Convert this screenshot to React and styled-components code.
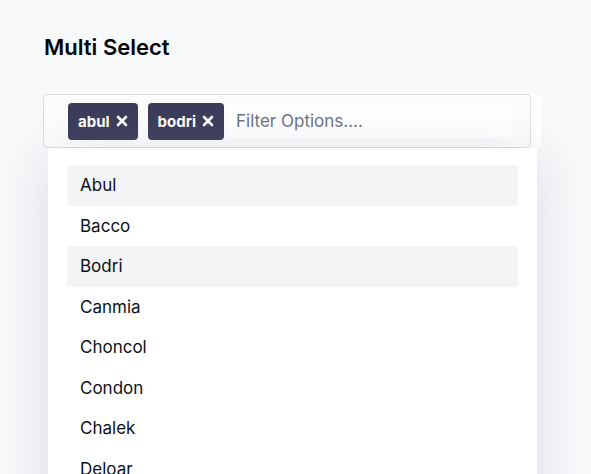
import React, { useState } from "react";
import styled, { createGlobalStyle } from "styled-components";

const GlobalStyle = createGlobalStyle`
  * { box-sizing: border-box; }
  html, body {
    margin: 0;
    height: 100%;
    background: #f8f9fa;
    font-family: Inter, "Noto Sans", sans-serif;
    color: #111827;
    overflow: hidden;
  }
`;

const Page = styled.div`
  padding: 34px 0 0 43px;
`;

const Title = styled.h2`
  margin: 0 0 34px 1px;
  font-size: 22px;
  line-height: 26px;
  font-weight: 600;
  color: #050509;
`;

const Select = styled.div`
  position: relative;
  width: 488px;
`;

const Control = styled.div`
  display: flex;
  align-items: center;
  gap: 10px;
  height: 54px;
  padding: 0 19px 0 24px;
  border: 1px solid #dcdde1;
  border-radius: 4px;
  background: #fcfcfd;
  box-shadow: 10px 0 0 #ffffff;
`;

const Tag = styled.span`
  display: inline-flex;
  align-items: center;
  gap: 6px;
  height: 37px;
  padding: 0 10px;
  border-radius: 4px;
  background: #3b3c59;
  color: #ffffff;
  font-size: 15px;
  font-weight: 700;
`;

const Remove = styled.button`
  display: flex;
  padding: 0;
  border: none;
  background: none;
  color: inherit;
  cursor: pointer;
`;

const Filter = styled.input`
  flex: 1;
  min-width: 0;
  height: 34px;
  margin-left: -6px;
  padding: 0 8px;
  border: none;
  outline: none;
  background: #ffffff;
  font-family: inherit;
  font-size: 17px;
  color: #111827;

  &::placeholder {
    color: #6b7280;
  }
`;

const Menu = styled.ul`
  position: absolute;
  top: 100%;
  left: 5px;
  width: 489px;
  margin: 0;
  padding: 17px 19px;
  list-style: none;
  background: #ffffff;
  box-shadow: 0 10px 50px rgba(140, 145, 175, 0.28);
`;

const Option = styled.li`
  height: 40.5px;
  padding: 0 13px;
  border-radius: 4px;
  background: ${({ selected }) => (selected ? "#f3f4f6" : "transparent")};
  font-size: 17px;
  line-height: 40.5px;
  color: #0b1020;
  cursor: pointer;
`;

const CloseIcon = () => (
  <svg width="12" height="12" viewBox="0 0 12 12" fill="none">
    <path d="M2 2l8 8M10 2l-8 8" stroke="currentColor" strokeWidth="2.6" strokeLinecap="round" />
  </svg>
);

const options = ["Abul", "Bacco", "Bodri", "Canmia", "Choncol", "Condon", "Chalek", "Deloar", "Dolani"];

export default function App() {
  const [selected, setSelected] = useState(["abul", "bodri"]);

  const toggle = (value) => {
    setSelected((prev) =>
      prev.includes(value) ? prev.filter((v) => v !== value) : [...prev, value]
    );
  };

  return (
    <>
      <GlobalStyle />
      <Page>
        <Title>Multi Select</Title>
        <Select>
          <Control>
            {selected.map((item) => (
              <Tag key={item}>
                {item}
                <Remove onClick={() => toggle(item)}>
                  <CloseIcon />
                </Remove>
              </Tag>
            ))}
            <Filter placeholder="Filter Options...." />
          </Control>
          <Menu>
            {options.map((item) => (
              <Option
                key={item}
                selected={selected.includes(item.toLowerCase())}
                onClick={() => toggle(item.toLowerCase())}
              >
                {item}
              </Option>
            ))}
          </Menu>
        </Select>
      </Page>
    </>
  );
}
